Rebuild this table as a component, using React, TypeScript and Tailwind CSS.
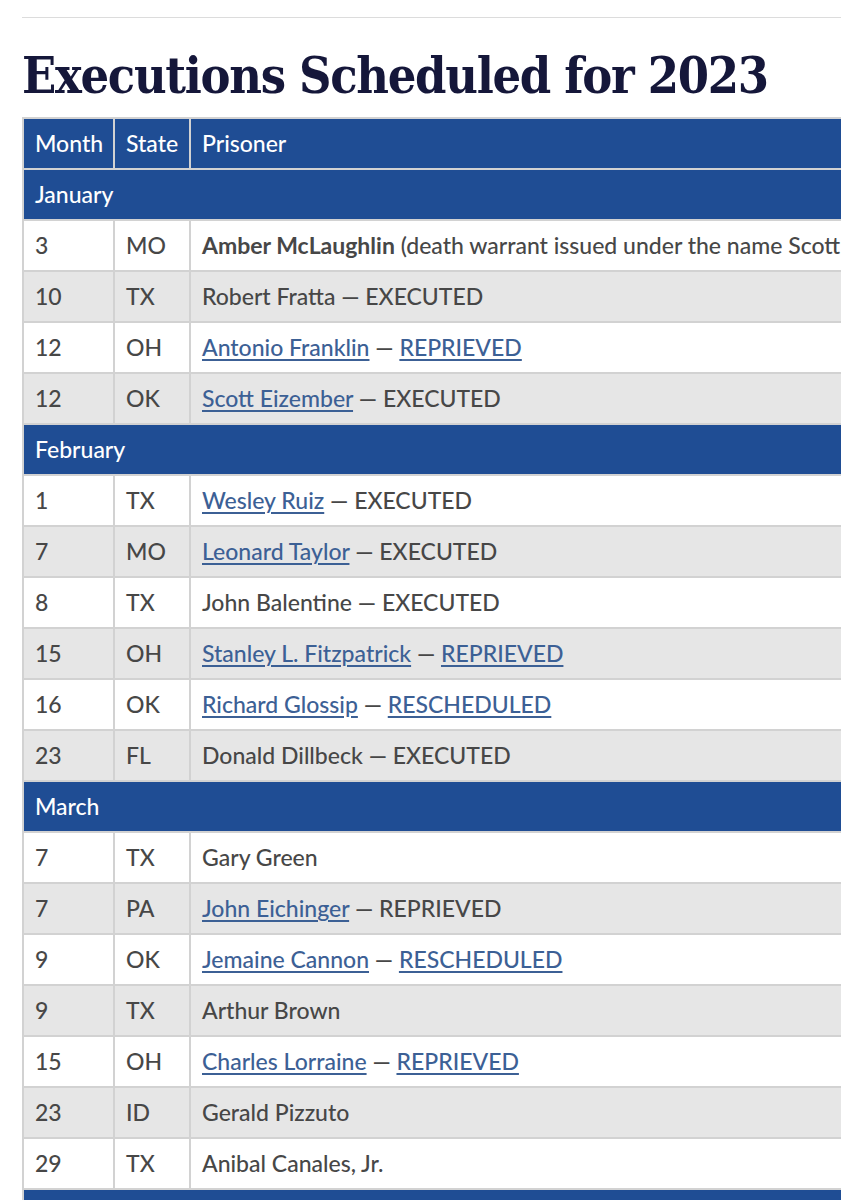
import React from "react";

type Part = { text: string; link?: boolean; bold?: boolean };
type Row = { day: string; state: string; parts: Part[] };
type Group = { month: string; rows: Row[] };

const dash = { text: " — " };

const schedule: Group[] = [
  {
    month: "January",
    rows: [
      {
        day: "3",
        state: "MO",
        parts: [
          { text: "Amber McLaughlin", bold: true },
          { text: " (death warrant issued under the name Scott McLaughlin) — EXECUTED" },
        ],
      },
      { day: "10", state: "TX", parts: [{ text: "Robert Fratta" }, dash, { text: "EXECUTED" }] },
      { day: "12", state: "OH", parts: [{ text: "Antonio Franklin", link: true }, dash, { text: "REPRIEVED", link: true }] },
      { day: "12", state: "OK", parts: [{ text: "Scott Eizember", link: true }, dash, { text: "EXECUTED" }] },
    ],
  },
  {
    month: "February",
    rows: [
      { day: "1", state: "TX", parts: [{ text: "Wesley Ruiz", link: true }, dash, { text: "EXECUTED" }] },
      { day: "7", state: "MO", parts: [{ text: "Leonard Taylor", link: true }, dash, { text: "EXECUTED" }] },
      { day: "8", state: "TX", parts: [{ text: "John Balentine" }, dash, { text: "EXECUTED" }] },
      { day: "15", state: "OH", parts: [{ text: "Stanley L. Fitzpatrick", link: true }, dash, { text: "REPRIEVED", link: true }] },
      { day: "16", state: "OK", parts: [{ text: "Richard Glossip", link: true }, dash, { text: "RESCHEDULED", link: true }] },
      { day: "23", state: "FL", parts: [{ text: "Donald Dillbeck" }, dash, { text: "EXECUTED" }] },
    ],
  },
  {
    month: "March",
    rows: [
      { day: "7", state: "TX", parts: [{ text: "Gary Green" }] },
      { day: "7", state: "PA", parts: [{ text: "John Eichinger", link: true }, dash, { text: "REPRIEVED" }] },
      { day: "9", state: "OK", parts: [{ text: "Jemaine Cannon", link: true }, dash, { text: "RESCHEDULED", link: true }] },
      { day: "9", state: "TX", parts: [{ text: "Arthur Brown" }] },
      { day: "15", state: "OH", parts: [{ text: "Charles Lorraine", link: true }, dash, { text: "REPRIEVED", link: true }] },
      { day: "23", state: "ID", parts: [{ text: "Gerald Pizzuto" }] },
      { day: "29", state: "TX", parts: [{ text: "Anibal Canales, Jr." }] },
    ],
  },
  {
    month: "April",
    rows: [{ day: "5", state: "TX", parts: [{ text: "Jedidiah Murphy" }] }],
  },
];

const cell = "h-[51px] border-2 border-[#d2d2d2] px-[11px] text-left align-middle whitespace-nowrap";

function PrisonerCell({ parts }: { parts: Part[] }) {
  return (
    <td className={cell}>
      {parts.map((p, i) =>
        p.link ? (
          <a key={i} href="#" className="text-[#3c6095] underline underline-offset-[3px] decoration-[1.5px]">
            {p.text}
          </a>
        ) : (
          <span key={i} className={p.bold ? "font-bold" : ""}>
            {p.text}
          </span>
        )
      )}
    </td>
  );
}

export default function App() {
  return (
    <div className="h-[1200px] w-[841px] overflow-hidden bg-white">
      <div className="ml-[22px] mt-[17px] h-px bg-[#dcdcdc]" />
      <h1 className="ml-[22px] mt-[28px] mb-[11px] whitespace-nowrap text-[50px] leading-[60px] font-bold tracking-[-1.3px] text-[#15173a] [font-family:'DejaVu_Serif_Condensed','DejaVu_Serif',serif] [font-stretch:condensed]">
        Executions Scheduled for 2023
      </h1>
      <table className="ml-[22px] w-[1100px] table-fixed border-collapse text-[23px] font-medium text-[#474747] [font-family:Lato,sans-serif]">
        <colgroup>
          <col className="w-[91px]" />
          <col className="w-[76px]" />
          <col />
        </colgroup>
        <thead>
          <tr className="bg-[#1f4d94] text-white">
            <th className={`${cell} font-medium`}>Month</th>
            <th className={`${cell} font-medium`}>State</th>
            <th className={`${cell} font-medium`}>Prisoner</th>
          </tr>
        </thead>
        {schedule.map((g) => (
          <tbody key={g.month}>
            <tr className="bg-[#1f4d94] text-white">
              <td colSpan={3} className={cell}>
                {g.month}
              </td>
            </tr>
            {g.rows.map((r, i) => (
              <tr key={i} className={i % 2 === 0 ? "bg-white" : "bg-[#e6e6e6]"}>
                <td className={cell}>{r.day}</td>
                <td className={cell}>{r.state}</td>
                <PrisonerCell parts={r.parts} />
              </tr>
            ))}
          </tbody>
        ))}
      </table>
    </div>
  );
}
